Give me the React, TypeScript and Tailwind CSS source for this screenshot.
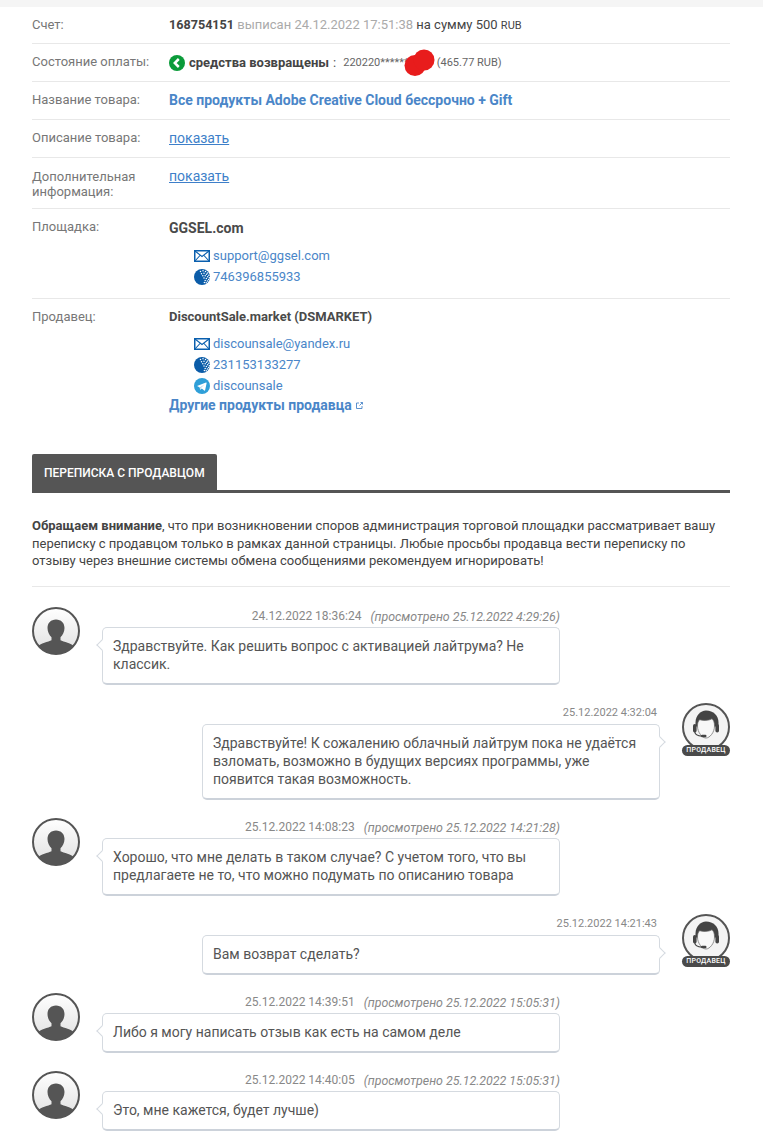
import type { ReactNode } from "react";

const linkCls = "text-[#4a86c8]";

function MailIcon() {
  return (
    <svg width="16" height="12" viewBox="0 0 16 12" className="shrink-0">
      <rect x="0.75" y="0.75" width="14.5" height="10.5" fill="#fff" stroke="#0a5fae" strokeWidth="1.5" />
      <path d="M1 1l7 5.500L15 1M1 11l5-5.500M15 11l-5-5.500" fill="none" stroke="#0a5fae" strokeWidth="1.100" />
    </svg>
  );
}

function WmIcon() {
  const dots = [
    [6.5, 2.5], [9, 1.8], [11.5, 2.6], [13.5, 4],
    [7.5, 4.8], [10, 4.2], [12.500, 5.3], [14.8, 6.2],
    [8.8, 6.800], [11.2, 6.800], [13.600, 7.800], [15.400, 8.800],
    [10, 9], [12.400, 9.400], [14.600, 10.400],
    [11.2, 11.400], [13.400, 12], [10.400, 13.400], [12.200, 13.800],
  ];
  return (
    <svg width="16" height="16" viewBox="0 0 16 16" className="shrink-0">
      <circle cx="8" cy="8" r="8" fill="#0b5ca8" />
      <g fill="#fff">
        {dots.map(([cx, cy], i) => (
          <circle key={i} cx={cx} cy={cy} r="0.750" />
        ))}
      </g>
    </svg>
  );
}

function TelegramIcon() {
  return (
    <svg width="16" height="16" viewBox="0 0 16 16" className="shrink-0">
      <circle cx="8" cy="8" r="8" fill="#2f9fd8" />
      <path d="M3 7.900l9-3.500c.4-.1.800.1.600.8l-1.500 7c-.1.500-.5.600-.9.400L7.800 10.500l-1.100 1.100c-.2.200-.4.200-.5-.1L5.500 9.300z" fill="#fff" />
      <path d="M5.700 9.400l4.800-3-3.600 3.700-.3 1.400z" fill="#b5d9ec" />
    </svg>
  );
}

function BuyerAvatar() {
  return (
    <svg width="48" height="48" viewBox="0 0 48 48" className="shrink-0">
      <defs>
        <linearGradient id="buyerBg" x1="0" y1="0" x2="0" y2="1">
          <stop offset="0" stopColor="#ffffff" />
          <stop offset="1" stopColor="#e0e0e0" />
        </linearGradient>
        <clipPath id="buyerClip">
          <circle cx="24" cy="24" r="23" />
        </clipPath>
      </defs>
      <circle cx="24" cy="24" r="23" fill="url(#buyerBg)" stroke="#555" strokeWidth="2" />
      <g clipPath="url(#buyerClip)" fill="#555">
        <path d="M24 12.500c5.200 0 8.500 3.500 8.500 8.500 0 4-1.800 7.200-4 9.200v3c3 1.500 11 2.800 14.500 6.800v8H5v-8c3.500-4 11.500-5.300 14.500-6.800v-3c-2.200-2-4-5.200-4-9.200 0-5 3.300-8.500 8.500-8.500z" />
      </g>
    </svg>
  );
}

function SellerAvatar() {
  return (
    <div className="relative w-12 h-12 shrink-0">
      <svg width="48" height="48" viewBox="0 0 48 48">
        <circle cx="24" cy="24" r="23" fill="#f4f4f4" stroke="#555" strokeWidth="2" />
        <path d="M24 7.500c7.500 0 12.500 5 12.500 12v4h-23v-4c0-7 5-12 10.500-12z" fill="#444" />
        <path d="M15.500 23c0-3 .7-5 2.200-6.300 3.500 1.200 9 1 12.300-.9 1.700 1.400 2.500 3.800 2.500 7.200 0 6.500-4.800 12-8.500 12s-8.500-5.500-8.500-12z" fill="#f8f8f8" stroke="#666" strokeWidth="0.700" />
        <rect x="11" y="21" width="3.600" height="8.500" rx="1.800" fill="#444" />
        <rect x="33.400" y="21" width="3.600" height="8.500" rx="1.800" fill="#444" />
        <path d="M12.800 29c.4 2.800 3 4 7 4.200" fill="none" stroke="#444" strokeWidth="1.200" />
        <rect x="19" y="31.800" width="5.500" height="2.500" rx="1.200" fill="#444" />
      </svg>
      <div className="absolute left-0 top-[42px] w-12 h-[11px] rounded-[6px] bg-[#4a4a4a] text-white text-[7px] leading-[11px] text-center font-medium tracking-[0.2px]">
        ПРОДАВЕЦ
      </div>
    </div>
  );
}

function Row({ label, children, className }: { label: ReactNode; children: ReactNode; className: string }) {
  return (
    <div className={`flex border-b border-[#e8e8e8] ${className}`}>
      <div className="w-[137px] shrink-0 text-[#777] leading-[18px]">{label}</div>
      <div className="flex-1 min-w-0">{children}</div>
    </div>
  );
}

function Contact({ icon, text }: { icon: ReactNode; text: string }) {
  return (
    <div className="flex items-center gap-[3px] h-[21px] pl-[25px]">
      {icon}
      <span className={`${linkCls} text-[13px]`}>{text}</span>
    </div>
  );
}

type Msg = { side: "buyer" | "seller"; date: string; seen?: string; text: ReactNode };

const messages: Msg[] = [
  {
    side: "buyer",
    date: "24.12.2022 18:36:24",
    seen: "(просмотрено 25.12.2022 4:29:26)",
    text: "Здравствуйте. Как решить вопрос с активацией лайтрума? Не классик.",
  },
  {
    side: "seller",
    date: "25.12.2022 4:32:04",
    text: "Здравствуйте! К сожалению облачный лайтрум пока не удаётся взломать, возможно в будущих версиях программы, уже появится такая возможность.",
  },
  {
    side: "buyer",
    date: "25.12.2022 14:08:23",
    seen: "(просмотрено 25.12.2022 14:21:28)",
    text: "Хорошо, что мне делать в таком случае? С учетом того, что вы предлагаете не то, что можно подумать по описанию товара",
  },
  { side: "seller", date: "25.12.2022 14:21:43", text: "Вам возврат сделать?" },
  {
    side: "buyer",
    date: "25.12.2022 14:39:51",
    seen: "(просмотрено 25.12.2022 15:05:31)",
    text: "Либо я могу написать отзыв как есть на самом деле",
  },
  {
    side: "buyer",
    date: "25.12.2022 14:40:05",
    seen: "(просмотрено 25.12.2022 15:05:31)",
    text: "Это, мне кажется, будет лучше)",
  },
];

function Bubble({ side, text }: { side: Msg["side"]; text: ReactNode }) {
  return (
    <div className="relative w-[458px] rounded-[5px] border border-[#d5dae0] border-b-2 border-b-[#ccd2da] bg-white px-[10px] pt-[9px] pb-[10px] text-[14px] leading-[18px] text-[#555]">
      {side === "buyer" ? (
        <span className="absolute left-[-5px] top-[13px] w-2 h-2 rotate-45 bg-white border-l border-b border-[#d5dae0]" />
      ) : (
        <span className="absolute right-[-5px] top-[13px] w-2 h-2 rotate-45 bg-white border-r border-t border-[#d5dae0]" />
      )}
      {text}
    </div>
  );
}

function Message({ m }: { m: Msg }) {
  if (m.side === "buyer") {
    return (
      <div className="flex">
        <BuyerAvatar />
        <div className="ml-[22px] w-[458px]">
          <div className="h-[20px] pt-[1px] flex justify-end items-start leading-[17px] text-[#888]">
            <span className="text-[12px]">{m.date}</span>
            <span className="ml-[9px] text-[12.4px] italic">{m.seen}</span>
          </div>
          <Bubble side="buyer" text={m.text} />
        </div>
      </div>
    );
  }
  return (
    <div className="flex justify-end">
      <div className="mr-[22px] w-[458px]">
        <div className="h-[21px] pr-[3px] pt-[1px] text-right text-[11px] leading-[17px] text-[#888]">{m.date}</div>
        <Bubble side="seller" text={m.text} />
      </div>
      <SellerAvatar />
    </div>
  );
}

export default function App() {
  return (
    <div className="h-[1139px] overflow-hidden bg-white text-[13px] text-[#555]" style={{ fontFamily: "Roboto, sans-serif" }}>
      <div className="h-[7px] bg-[#f5f5f5]" />
      <div className="w-[698px] ml-[32px]">
        <Row label="Счет:" className="h-[37px] pt-[9px]">
          <div className="leading-[18px] whitespace-nowrap">
            <b className="font-bold text-[12.6px] text-[#444]">168754151</b>{" "}
            <span className="text-[#aaa]">выписан 24.12.2022 17:51:38</span>{" "}
            <span className="text-[#444]">на сумму 500 <span className="text-[11px]">RUB</span></span>
          </div>
        </Row>
        <Row label="Состояние оплаты:" className="h-[38px] pt-[9px]">
          <div className="relative flex items-center h-[20px] whitespace-nowrap">
            <svg width="16" height="16" viewBox="0 0 16 16" className="shrink-0">
              <circle cx="8" cy="8" r="8" fill="#0b9b3a" />
              <path d="M9.800 4L5.800 8l4 4" fill="none" stroke="#fff" strokeWidth="2.500" />
            </svg>
            <b className="ml-[4px] font-bold text-[#444]">средства возвращены</b>
            <span className="ml-[4px] text-[#555]">:</span>
            <span className="ml-[7px] text-[11px] text-[#666]">220220******</span>
            <span className="ml-[28px] text-[11px] text-[#666]">(465.77 RUB)</span>
            <svg width="31" height="28" viewBox="0 0 31 28" className="absolute left-[235px] top-[-4px]">
              <circle cx="11" cy="16.500" r="10.500" fill="#e81c1c" />
              <circle cx="20" cy="11" r="10.500" fill="#e81c1c" />
            </svg>
          </div>
        </Row>
        <Row label="Название товара:" className="h-[38px] pt-[9px]">
          <div className={`${linkCls} font-bold text-[14px] leading-[18px] whitespace-nowrap`}>Все продукты Adobe Creative Cloud бессрочно + Gift</div>
        </Row>
        <Row label="Описание товара:" className="h-[38px] pt-[9px]">
          <a className="block text-[#3e7fc9] underline text-[14px] leading-[18px]">показать</a>
        </Row>
        <Row label={<div className="leading-[15px] mt-[2px]">Дополнительная<br />информация:</div>} className="h-[51px] pt-[9px]">
          <a className="block text-[#3e7fc9] underline text-[14px] leading-[18px]">показать</a>
        </Row>
        <Row label="Площадка:" className="h-[90px] pt-[9px]">
          <div className="font-bold text-[14px] leading-[20px] text-[#4a4a4a]">GGSEL.com</div>
          <div className="mt-[7px]">
            <Contact icon={<MailIcon />} text="support@ggsel.com" />
            <Contact icon={<WmIcon />} text="746396855933" />
          </div>
        </Row>
        <div className="flex h-[123px] pt-[9px]">
          <div className="w-[137px] shrink-0 text-[#777] leading-[18px]">Продавец:</div>
          <div className="flex-1">
            <div className="font-bold text-[13px] leading-[20px] mt-[-1px] text-[#4a4a4a]">DiscountSale.market (DSMARKET)</div>
            <div className="mt-[6px]">
              <Contact icon={<MailIcon />} text="discounsale@yandex.ru" />
              <Contact icon={<WmIcon />} text="231153133277" />
              <Contact icon={<TelegramIcon />} text="discounsale" />
            </div>
            <div className="flex items-center gap-[4px] leading-[20px] mt-[-1px]">
              <span className={`${linkCls} font-bold text-[14px]`}>Другие продукты продавца</span>
              <svg width="7" height="7" viewBox="0 0 7 7">
                <path d="M3 1H.5v5.500H6V4M3.500 3.500L6.500.5M4.500.5h2v2" fill="none" stroke="#4a86c8" strokeWidth="0.900" />
              </svg>
            </div>
          </div>
        </div>

        <div className="mt-[32px] h-[39px] border-b-[3px] border-[#555]">
          <div className="w-[185px] h-[36px] rounded-t-[2px] bg-[#555] text-white text-[12px] font-medium leading-[39px] pl-[12px]">ПЕРЕПИСКА С ПРОДАВЦОМ</div>
        </div>

        <div className="mt-[24px] pb-[16px] border-b border-[#e8e8e8] text-[13px] leading-[17.500px] text-[#444]">
          <b className="font-bold">Обращаем внимание</b>, что при возникновении споров администрация торговой площадки рассматривает вашу переписку с продавцом только в рамках данной страницы. Любые просьбы продавца вести переписку по отзыву через внешние системы обмена сообщениями рекомендуем игнорировать!
        </div>

        <div className="mt-[20px] flex flex-col gap-[18px]">
          {messages.map((m, i) => (
            <Message key={i} m={m} />
          ))}
        </div>
      </div>
    </div>
  );
}
